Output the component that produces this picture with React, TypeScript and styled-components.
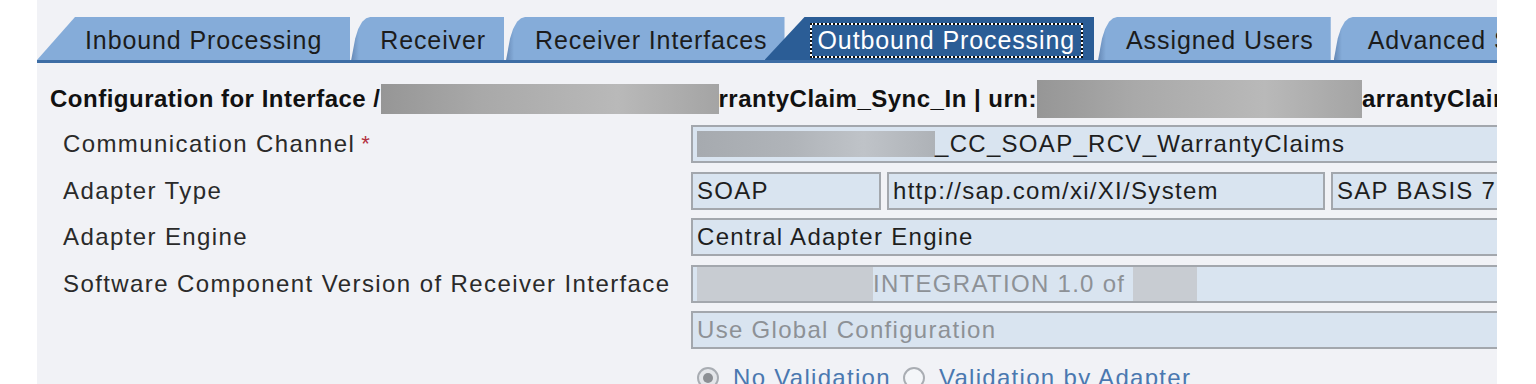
import React from "react";
import styled, { createGlobalStyle } from "styled-components";

const GlobalStyle = createGlobalStyle`
  html, body {
    margin: 0;
    padding: 0;
    background: #fff;
  }
  body {
    font-family: "Liberation Sans", Arial, sans-serif;
  }
`;

type TabShape = "first" | "inner" | "active";

const clipFor = (shape: TabShape) => {
  if (shape === "first") return "polygon(0 100%, 38px 0, 100% 0, 100% 100%)";
  if (shape === "active") return "polygon(0 100%, 40px 0, 100% 0, 100% 100%)";
  return "polygon(0 100%, 2px 75%, 4px 50%, 7px 28%, 11px 11%, 15px 3%, 19px 0, 100% 0, 100% 100%)";
};

const Page = styled.div`
  width: 1536px;
  height: 384px;
  overflow: hidden;
  background: #fff;
`;

const Panel = styled.div`
  margin-left: 37px;
  width: 1460px;
  height: 384px;
  background: #f1f2f6;
  overflow: hidden;
`;

const TabStrip = styled.div`
  display: flex;
  align-items: flex-end;
  padding-top: 17px;
  border-bottom: 3px solid #3d6da5;
  white-space: nowrap;
`;

const Tab = styled.div<{ $shape: TabShape; $pl: number; $pr: number; $ml: number }>`
  flex: none;
  position: relative;
  z-index: ${(p) => (p.$shape === "active" ? 2 : 1)};
  display: flex;
  align-items: center;
  height: 43px;
  box-sizing: border-box;
  margin-left: ${(p) => p.$ml}px;
  padding: 4px ${(p) => p.$pr}px 0 ${(p) => p.$pl}px;
  font-size: 25px;
  letter-spacing: 0.9px;
  color: ${(p) => (p.$shape === "active" ? "#fff" : "#1c1c1c")};
  background: ${(p) =>
    p.$shape === "active"
      ? "#2b5d96"
      : p.$shape === "inner"
      ? "linear-gradient(90deg, #6689b6 0, #85acd9 8px)"
      : "#85acd9"};
  clip-path: ${(p) => clipFor(p.$shape)};
`;

const FocusLabel = styled.span`
  padding: 0 6px;
  line-height: 31px;
  border: 2px dotted #0b0b0b;
  background: linear-gradient(#2b5d96, #2b5d96) padding-box, #fff border-box;
`;

const Heading = styled.div`
  display: flex;
  align-items: center;
  height: 30px;
  margin-top: 21px;
  padding-left: 13px;
  font-size: 24px;
  font-weight: 700;
  letter-spacing: 0.5px;
  color: #111;
  white-space: nowrap;
`;

const Redacted = styled.span<{ $w: number; $h: number; $tone: "dark" | "mid" | "light" }>`
  flex: none;
  display: inline-block;
  width: ${(p) => p.$w}px;
  height: ${(p) => p.$h}px;
  background: ${(p) =>
    p.$tone === "dark"
      ? "linear-gradient(90deg, #969696, #a9a9a9 30%, #b9b9b9 70%, #a4a4a4)"
      : p.$tone === "mid"
      ? "linear-gradient(90deg, #a6aaaf, #b0b4b9 40%, #bfc3c8 70%, #aeb2b7)"
      : "#c8ccd2"};
`;

const Form = styled.div`
  display: grid;
  grid-template-columns: 654px 900px;
  grid-auto-rows: 38px;
  row-gap: 8.6px;
  margin-top: 11px;
`;

const Label = styled.div`
  display: flex;
  align-items: center;
  padding-left: 26px;
  font-size: 24px;
  letter-spacing: 1.4px;
  color: #2a2a2a;
  white-space: nowrap;
`;

const Required = styled.span`
  margin-left: 6px;
  color: #b3303f;
  font-size: 22px;
`;

const FieldRow = styled.div`
  display: flex;
  gap: 6px;
`;

const Field = styled.div<{ $width?: number; $disabled?: boolean }>`
  flex: none;
  display: flex;
  align-items: center;
  box-sizing: border-box;
  height: 38px;
  width: ${(p) => (p.$width ? `${p.$width}px` : "100%")};
  padding-left: 4px;
  border: 2px solid #a3a7ad;
  background: #d9e4f0;
  font-size: 24px;
  letter-spacing: 1.3px;
  color: ${(p) => (p.$disabled ? "#8d9196" : "#1e1e1e")};
  white-space: nowrap;
  overflow: hidden;
`;

const RadioGroup = styled.div`
  display: flex;
  align-items: center;
  padding-left: 6px;
  margin-top: 3px;
  font-size: 24px;
  letter-spacing: 1.3px;
  color: #4a78b0;
  white-space: nowrap;
`;

const RadioDot = styled.span<{ $checked?: boolean }>`
  flex: none;
  position: relative;
  width: 22px;
  height: 22px;
  box-sizing: border-box;
  border-radius: 50%;
  border: 2px solid #a9adb3;
  background: ${(p) => (p.$checked ? "#e4e6ea" : "#f4f6f9")};
  margin-right: 14px;

  &::after {
    content: "";
    display: ${(p) => (p.$checked ? "block" : "none")};
    position: absolute;
    left: 4px;
    top: 4px;
    width: 10px;
    height: 10px;
    border-radius: 50%;
    background: #8c8f94;
  }
`;

const RadioText = styled.span`
  margin-right: 12px;
`;

const Spacer = styled.div``;

const tabs: { label: string; shape: TabShape; pl: number; pr: number; ml: number }[] = [
  { label: "Inbound Processing", shape: "first", pl: 48, pr: 28, ml: 0 },
  { label: "Receiver", shape: "inner", pl: 29, pr: 18, ml: 1 },
  { label: "Receiver Interfaces", shape: "inner", pl: 29, pr: 17, ml: 2 },
  { label: "Outbound Processing", shape: "active", pl: 45, pr: 11, ml: -20 },
  { label: "Assigned Users", shape: "inner", pl: 28, pr: 17, ml: 4 },
  { label: "Advanced Settings", shape: "inner", pl: 34, pr: 20, ml: 3 },
];

export default function App() {
  return (
    <Page>
      <GlobalStyle />
      <Panel>
        <TabStrip>
          {tabs.map((t) => (
            <Tab key={t.label} $shape={t.shape} $pl={t.pl} $pr={t.pr} $ml={t.ml}>
              {t.shape === "active" ? <FocusLabel>{t.label}</FocusLabel> : t.label}
            </Tab>
          ))}
        </TabStrip>

        <Heading>
          Configuration for Interface /
          <Redacted $w={338} $h={30} $tone="dark" />
          rrantyClaim_Sync_In | urn:
          <Redacted $w={325} $h={38} $tone="dark" />
          arrantyClaim_Sync_In
        </Heading>

        <Form>
          <Label>
            Communication Channel<Required>*</Required>
          </Label>
          <Field>
            <Redacted $w={238} $h={26} $tone="mid" />
            _CC_SOAP_RCV_WarrantyClaims
          </Field>

          <Label>Adapter Type</Label>
          <FieldRow>
            <Field $width={190}>SOAP</Field>
            <Field $width={438}>http://sap.com/xi/XI/System</Field>
            <Field $width={260}>SAP BASIS 7.50</Field>
          </FieldRow>

          <Label>Adapter Engine</Label>
          <Field>Central Adapter Engine</Field>

          <Label>Software Component Version of Receiver Interface</Label>
          <Field $disabled>
            <Redacted $w={176} $h={34} $tone="light" />
            INTEGRATION 1.0 of&nbsp;
            <Redacted $w={64} $h={34} $tone="light" />
          </Field>

          <Spacer />
          <Field $disabled>Use Global Configuration</Field>

          <Spacer />
          <RadioGroup>
            <RadioDot $checked />
            <RadioText>No Validation</RadioText>
            <RadioDot />
            <RadioText>Validation by Adapter</RadioText>
          </RadioGroup>
        </Form>
      </Panel>
    </Page>
  );
}
